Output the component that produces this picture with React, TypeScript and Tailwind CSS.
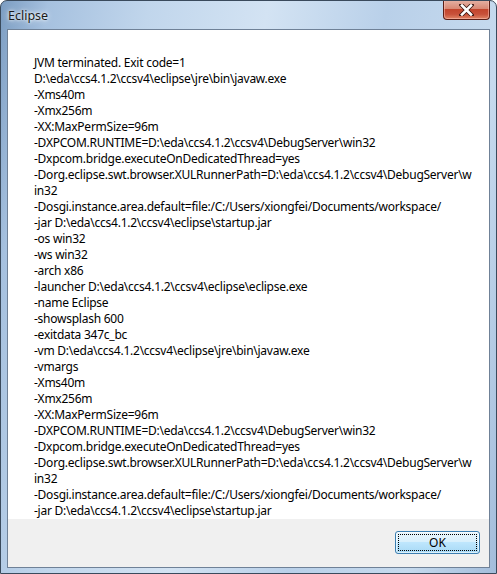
import React from "react";

const lines = [
  "JVM terminated. Exit code=1",
  "D:\\eda\\ccs4.1.2\\ccsv4\\eclipse\\jre\\bin\\javaw.exe",
  "-Xms40m",
  "-Xmx256m",
  "-XX:MaxPermSize=96m",
  "-DXPCOM.RUNTIME=D:\\eda\\ccs4.1.2\\ccsv4\\DebugServer\\win32",
  "-Dxpcom.bridge.executeOnDedicatedThread=yes",
  "-Dorg.eclipse.swt.browser.XULRunnerPath=D:\\eda\\ccs4.1.2\\ccsv4\\DebugServer\\w",
  "in32",
  "-Dosgi.instance.area.default=file:/C:/Users/xiongfei/Documents/workspace/",
  "-jar D:\\eda\\ccs4.1.2\\ccsv4\\eclipse\\startup.jar",
  "-os win32",
  "-ws win32",
  "-arch x86",
  "-launcher D:\\eda\\ccs4.1.2\\ccsv4\\eclipse\\eclipse.exe",
  "-name Eclipse",
  "-showsplash 600",
  "-exitdata 347c_bc",
  "-vm D:\\eda\\ccs4.1.2\\ccsv4\\eclipse\\jre\\bin\\javaw.exe",
  "-vmargs",
  "-Xms40m",
  "-Xmx256m",
  "-XX:MaxPermSize=96m",
  "-DXPCOM.RUNTIME=D:\\eda\\ccs4.1.2\\ccsv4\\DebugServer\\win32",
  "-Dxpcom.bridge.executeOnDedicatedThread=yes",
  "-Dorg.eclipse.swt.browser.XULRunnerPath=D:\\eda\\ccs4.1.2\\ccsv4\\DebugServer\\w",
  "in32",
  "-Dosgi.instance.area.default=file:/C:/Users/xiongfei/Documents/workspace/",
  "-jar D:\\eda\\ccs4.1.2\\ccsv4\\eclipse\\startup.jar",
];

export default function App() {
  return (
    <div className="w-[497px] h-[574px] bg-white">
      <div className="w-[497px] h-[574px] flex flex-col rounded-t-[7px] border border-[#3a4a5c] bg-[linear-gradient(100deg,#7c9dc2_0%,#a6c1df_8%,#c1d6ec_25%,#d3e3f3_45%,#b9d0e9_65%,#c6daee_85%,#a3bddb_100%)] font-['Noto_Sans',sans-serif] text-black overflow-hidden">
        <div className="h-[28px] flex items-start justify-between pl-[7px] pr-[6px] shrink-0">
          <span className="mt-[7px] text-[12.5px] leading-[15px] text-[#1a1a1a] [text-shadow:0_0_6px_#ffffff,0_0_3px_#ffffff]">
            Eclipse
          </span>
          <div className="w-[47px] h-[20px] -mt-px rounded-b-[4px] border border-[#5a1e16] border-t-0 bg-[linear-gradient(180deg,#e6b3a6_0%,#d88975_45%,#c3452d_50%,#c8513a_75%,#e08566_100%)] flex items-center justify-center shadow-[inset_0_0_0_1px_rgba(255,200,190,0.5)]">
            <svg width="15" height="12" viewBox="0 0 15 12">
              <path d="M2.5 1 L12.5 11 M12.5 1 L2.5 11" stroke="#3a1510" strokeWidth="4.2" strokeLinecap="square" />
              <path d="M3 1.5 L12 10.5 M12 1.5 L3 10.5" stroke="#ffffff" strokeWidth="2.6" strokeLinecap="square" />
            </svg>
          </div>
        </div>
        <div className="mx-[6px] flex-1 flex flex-col border border-[#6f8197] bg-[#f0f0f0]">
          <div className="flex-1 bg-white pl-[26px] pt-[25px]">
            {lines.map((l, i) => (
              <div key={i} className="h-[16px] text-[12px] leading-[16px] whitespace-nowrap tracking-[-0.25px]">
                {l}
              </div>
            ))}
          </div>
          <div className="h-[48px] shrink-0 flex items-center justify-end pr-[9px] pb-[1px]">
            <button className="w-[85px] h-[23px] rounded-[3px] border border-[#3c7fb1] bg-[linear-gradient(180deg,#eaf6fd_0%,#d9f0fc_45%,#bee6fd_50%,#a7d9f5_100%)] p-[2px] shadow-[inset_0_0_0_1px_rgba(255,255,255,0.6)]">
              <div className="w-full h-full border border-dotted border-black flex items-center justify-center text-[12px] leading-none">
                OK
              </div>
            </button>
          </div>
        </div>
        <div className="h-[8px] shrink-0" />
      </div>
    </div>
  );
}
